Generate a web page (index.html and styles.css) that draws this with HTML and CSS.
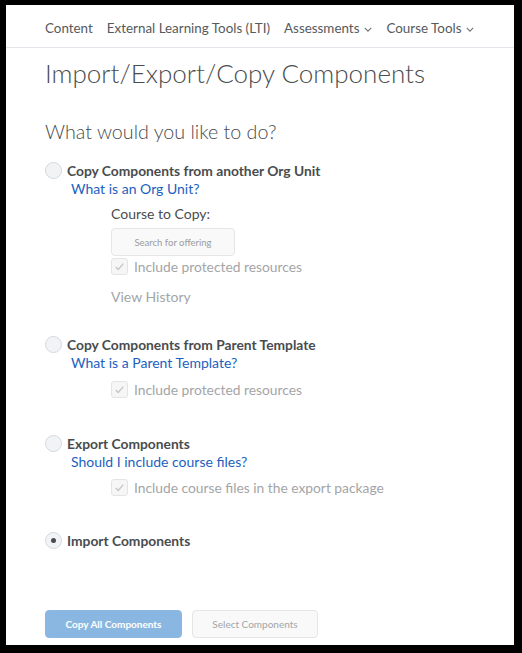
FILE: index.html
```html
<!DOCTYPE html>
<html>
<head>
<meta charset="utf-8">
<link rel="stylesheet" href="styles.css">
</head>
<body>
<div class="frame">
  <nav class="nav">
    <span class="nav-item">Content</span>
    <span class="nav-item">External Learning Tools (LTI)</span>
    <span class="nav-item">Assessments <svg class="chev" viewBox="0 0 10 6" width="8" height="5"><path d="M1 1l4 4 4-4" fill="none" stroke="#6e7376" stroke-width="1.4"/></svg></span>
    <span class="nav-item">Course Tools <svg class="chev" viewBox="0 0 10 6" width="8" height="5"><path d="M1 1l4 4 4-4" fill="none" stroke="#6e7376" stroke-width="1.4"/></svg></span>
  </nav>
  <main class="content">
    <h1 class="title">Import/Export/Copy Components</h1>
    <h2 class="question">What would you like to do?</h2>

    <section class="option opt-org">
      <div class="opt-row"><span class="radio"></span><span class="opt-label">Copy Components from another Org Unit</span></div>
      <a class="help">What is an Org Unit?</a>
      <div class="sub">
        <div class="field-label">Course to Copy:</div>
        <div class="search">Search for offering</div>
        <div class="check-row"><span class="check"><svg viewBox="0 0 18 18" width="18" height="18"><path d="M4.5 9.5l3 3 6-7" fill="none" stroke="#c3c5c7" stroke-width="1.6"/></svg></span><span class="check-label">Include protected resources</span></div>
        <div class="history">View History</div>
      </div>
    </section>

    <section class="option opt-parent">
      <div class="opt-row"><span class="radio"></span><span class="opt-label">Copy Components from Parent Template</span></div>
      <a class="help">What is a Parent Template?</a>
      <div class="sub">
        <div class="check-row"><span class="check"><svg viewBox="0 0 18 18" width="18" height="18"><path d="M4.5 9.5l3 3 6-7" fill="none" stroke="#c3c5c7" stroke-width="1.6"/></svg></span><span class="check-label">Include protected resources</span></div>
      </div>
    </section>

    <section class="option opt-export">
      <div class="opt-row"><span class="radio"></span><span class="opt-label">Export Components</span></div>
      <a class="help">Should I include course files?</a>
      <div class="sub">
        <div class="check-row"><span class="check"><svg viewBox="0 0 18 18" width="18" height="18"><path d="M4.5 9.5l3 3 6-7" fill="none" stroke="#c3c5c7" stroke-width="1.6"/></svg></span><span class="check-label">Include course files in the export package</span></div>
      </div>
    </section>

    <section class="option opt-import">
      <div class="opt-row"><span class="radio radio-on"></span><span class="opt-label">Import Components</span></div>
    </section>

    <div class="buttons">
      <button class="btn btn-primary">Copy All Components</button>
      <button class="btn btn-secondary">Select Components</button>
    </div>
  </main>
</div>
</body>
</html>
```

FILE: styles.css
```css
* { box-sizing: border-box; }
html, body { margin: 0; padding: 0; background: #000; }
body { font-family: Lato, "Open Sans", sans-serif; color: #494c4e; }
.frame {
  width: 522px;
  height: 653px;
  background: #fff;
  border-style: solid;
  border-color: #000;
  border-width: 5px 8px 8px 6px;
  overflow: hidden;
}
.nav {
  height: 43px;
  border-bottom: 1px solid #e3e6ea;
  display: flex;
  align-items: center;
  gap: 14px;
  padding: 4px 0 0 39px;
  font-size: 13.4px;
  color: #565a5c;
}
.nav-item { display: flex; align-items: center; gap: 5px; white-space: nowrap; }
.chev { margin-top: 2px; }
.content { padding: 0 0 0 39px; }
.title {
  margin: 8px 0 0;
  font-size: 26px;
  font-weight: 300;
  line-height: 34px;
  color: #494c4e;
}
.question {
  margin: 29px 0 0;
  font-size: 19.7px;
  font-weight: 300;
  line-height: 26px;
  color: #494c4e;
}
.opt-org { margin-top: 15px; }
.opt-parent { margin-top: 27px; }
.opt-export { margin-top: 34px; }
.opt-import { margin-top: 33px; }
.opt-row { display: flex; align-items: center; height: 20px; }
.radio {
  width: 17px; height: 17px;
  border-radius: 50%;
  border: 1px solid #d3d9e3;
  background: #f2f3f5;
  margin-right: 5px;
  position: relative;
  flex: none;
}
.radio-on::after {
  content: "";
  position: absolute;
  left: 5px; top: 5px;
  width: 5px; height: 5px;
  border-radius: 50%;
  background: #494c4e;
}
.opt-label { font-size: 13.8px; font-weight: 700; color: #494c4e; }
.help {
  display: block;
  margin: 0 0 0 26px;
  font-size: 14px;
  line-height: 18px;
  color: #1c5fc0;
}
.sub { padding-left: 66px; }
.field-label { margin-top: 6px; font-size: 14px; line-height: 20px; color: #494c4e; }
.search {
  margin-top: 4px;
  width: 124px;
  height: 28px;
  border: 1px solid #e6e6e6;
  border-radius: 4px;
  background: #f9f9f9;
  font-size: 9.5px;
  color: #9a9c9e;
  display: flex;
  align-items: center;
  justify-content: center;
}
.check-row { display: flex; align-items: center; height: 20px; margin-top: 0; }
.opt-parent .check-row { margin-top: 7px; }
.opt-export .check-row { margin-top: 6px; }
.check {
  width: 17px; height: 17px;
  border: 1px solid #e3e4e6;
  border-radius: 3px;
  background: #f6f6f7;
  margin-right: 6px;
  display: flex; align-items: center; justify-content: center;
  flex: none;
}
.check svg { width: 15px; height: 15px; }
.check-label { font-size: 13.8px; color: #a3a5a7; }
.history { margin-top: 11px; font-size: 14px; line-height: 20px; color: #a3a5a7; }
.buttons { display: flex; gap: 10px; margin-top: 60px; }
.btn {
  height: 28px;
  border-radius: 4px;
  font-family: Lato, sans-serif;
  font-size: 10px;
  padding: 0;
}
.btn-primary {
  width: 137px;
  border: 1px solid #8ab7e1;
  background: #8ab7e1;
  color: #fff;
  font-weight: 700;
}
.btn-secondary {
  width: 126px;
  border: 1px solid #e5e6e8;
  background: #f9f9f9;
  color: #a3a5a7;
}
```
